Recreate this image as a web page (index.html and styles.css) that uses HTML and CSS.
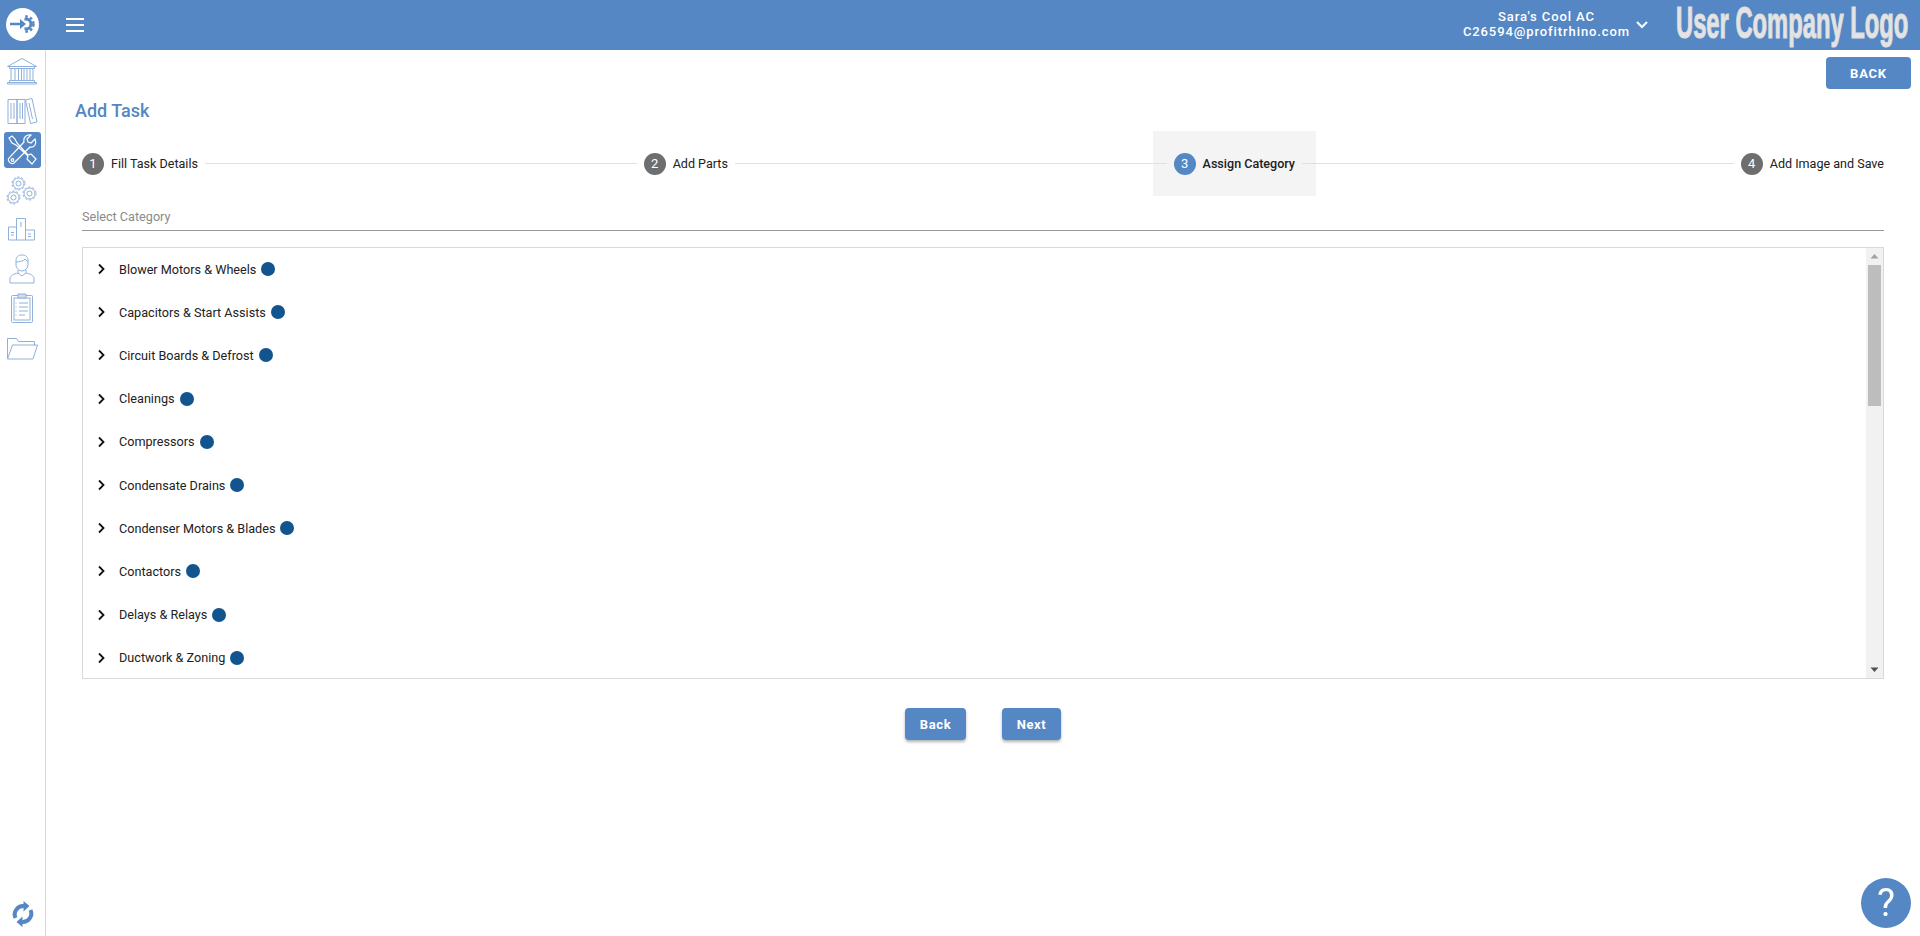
FILE: index.html
```html
<!DOCTYPE html>
<html lang="en">
<head>
<meta charset="utf-8">
<title>Add Task</title>
<link rel="stylesheet" href="styles.css">
</head>
<body>
<header class="topbar">
  <div class="brand">
    <svg width="33" height="33" viewBox="0 0 33 33"><circle cx="16.500" cy="16.500" r="16.500" fill="#fff"/><circle cx="20" cy="16" r="7.500" fill="none" stroke="#5587c4" stroke-width="2.500" stroke-dasharray="2.600 2.300"/><circle cx="20" cy="16" r="5" fill="none" stroke="#5587c4" stroke-width="3"/><rect x="11" y="8" width="7.500" height="16" fill="#fff"/><path d="M4 14.800h10V11l6 5-6 5v-3.800H4z" fill="#5587c4"/></svg>
  </div>
  <button class="menu" aria-label="Menu"><span></span><span></span><span></span></button>
  <div class="spacer"></div>
  <div class="account">
    <div>Sara's Cool AC</div>
    <div>C26594@profitrhino.com</div>
  </div>
  <svg class="acct-chev" width="14" height="10" viewBox="0 0 14 10"><path d="M2 2l5 5 5-5" fill="none" stroke="#fff" stroke-width="2"/></svg>
  <div class="logo"><span>User Company Logo</span></div>
</header>
<div class="body">
  <nav class="sidebar">
    <div class="nav-items">
      <a class="nav-item"><svg width="32" height="28" viewBox="0 0 32 28"><g fill="none" stroke="#8fb0da" stroke-width="1"><path d="M1.500 9.500L16 1.500l14.500 8z"/><path d="M3.500 9.500v2h25v-2"/><path d="M5 11.500v12h4v-12M12.500 11.500v12h3v-12M18 11.500v12h3v-12M24 11.500v12h3v-12"/><path d="M3.500 23.500h25v2h-25zM1.500 25.500h29v1.500h-29z"/></g></svg></a>
      <a class="nav-item"><svg width="32" height="28" viewBox="0 0 32 28"><g fill="none" stroke="#8fb0da" stroke-width="1"><path d="M2 2.500h9v24H2zM11 2.500h8v24h-8zM19.500 3l6.500-1.500 5 23.500-6.500 1.500z"/><path d="M5 6v16M8 6v16M14 6v16M16.500 6v16M23 6l3.500 16"/></g></svg></a>
      <a class="nav-item active"><svg width="32" height="32" viewBox="0 0 32 32"><g fill="none" stroke="#fff" stroke-width="1.200"><path d="M3 4l3-2 3 3 2 4 11 12 3-1 5 5-4 5-5-5 1-3L10 11 6 9z"/><path d="M29 5l-4 4-3-1-1-3 4-4c-4-1-8 2-7 7L3 24c-2 3 2 7 5 5L24 13c4 1 7-3 5-8z"/><circle cx="6.500" cy="26" r="1.300"/></g></svg></a>
      <a class="nav-item"><svg width="32" height="36" viewBox="0 0 32 36"><g fill="none" stroke="#8fb0da" stroke-width="1"><circle cx="12.500" cy="11.500" r="5.500"/><circle cx="12.500" cy="11.500" r="2.500"/><circle cx="12.500" cy="11.500" r="6.500" stroke-dasharray="2 2.100"/><circle cx="7.500" cy="25.500" r="5.500"/><circle cx="7.500" cy="25.500" r="2.500"/><circle cx="7.500" cy="25.500" r="6.500" stroke-dasharray="2 2.100"/><circle cx="23.500" cy="21.500" r="5.500"/><circle cx="23.500" cy="21.500" r="2.500"/><circle cx="23.500" cy="21.500" r="6.500" stroke-dasharray="2 2.100"/></g></svg></a>
      <a class="nav-item"><svg width="30" height="24" viewBox="0 0 30 24"><g fill="none" stroke="#8fb0da" stroke-width="1"><path d="M1.500 10h8v13h-8zM9.500 1.500h9V23h-9zM18.500 13h9v10h-9z"/><path d="M14 5v5M4 15.500h3M4 18h3M21 17h3M21 19.500h3"/></g></svg></a>
      <a class="nav-item"><svg width="26" height="30" viewBox="0 0 26 30"><g fill="none" stroke="#8fb0da" stroke-width="1"><path d="M7 7c0-4 2-6 6-6s6 2 6 6v4c0 3-3 6-6 6s-6-3-6-6z"/><path d="M7 8c3 0 8-1 9-3l3 3"/><path d="M9 16v3c-4 1-8 2-8 6v4h24v-4c0-4-4-5-8-6v-3"/><path d="M9 19l4 3 4-3"/></g></svg></a>
      <a class="nav-item"><svg width="24" height="30" viewBox="0 0 24 30"><g fill="none" stroke="#8fb0da" stroke-width="1"><rect x="1.500" y="2.500" width="21" height="27" rx="1"/><rect x="4" y="5" width="16" height="22"/><path d="M8 1h8v4H8z" fill="#cfdcee"/><path d="M5.500 10h1M5.500 14h1M5.500 18h1M5.500 22h1M9 10h9M9 14h9M9 18h9M9 22h6"/></g></svg></a>
      <a class="nav-item"><svg width="32" height="24" viewBox="0 0 32 24"><g fill="none" stroke="#8fb0da" stroke-width="1"><path d="M1.500 22V2.500h9l2 3h16v4"/><path d="M1.500 23l5-14h25l-4.500 14z"/></g></svg></a>
    </div>
    <div class="spacer"></div>
    <svg class="sync" width="26" height="26" viewBox="0 0 26 26"><g fill="none" stroke="#5587c4" stroke-width="4"><path d="M5.500 17A8.500 8.500 0 0 1 14 5"/><path d="M20.500 9A8.500 8.500 0 0 1 12 21"/></g><path d="M13.500 0l6 5-6 5.500zM12.500 26l-6-5 6-5.500z" fill="#5587c4"/></svg>
  </nav>
  <main class="content">
    <div class="top-actions"><button class="btn btn-top">BACK</button></div>
    <h1 class="title">Add Task</h1>
    <div class="stepper">
      <div class="step"><span class="num">1</span><span class="label">Fill Task Details</span></div>
      <div class="line"></div>
      <div class="step"><span class="num">2</span><span class="label">Add Parts</span></div>
      <div class="line"></div>
      <div class="step current"><span class="num">3</span><span class="label">Assign Category</span></div>
      <div class="line"></div>
      <div class="step"><span class="num">4</span><span class="label">Add Image and Save</span></div>
    </div>
    <div class="panel">
      <div class="field">Select Category</div>
      <div class="tree">
        <ul class="rows">
          <li class="row"><svg class="chev" width="9" height="12" viewBox="0 0 9 12"><path d="M2 1.500L6.500 6 2 10.500" fill="none" stroke="#111" stroke-width="1.800"/></svg><span>Blower Motors &amp; Wheels</span><i class="dot"></i></li>
          <li class="row"><svg class="chev" width="9" height="12" viewBox="0 0 9 12"><path d="M2 1.500L6.500 6 2 10.500" fill="none" stroke="#111" stroke-width="1.800"/></svg><span>Capacitors &amp; Start Assists</span><i class="dot"></i></li>
          <li class="row"><svg class="chev" width="9" height="12" viewBox="0 0 9 12"><path d="M2 1.500L6.500 6 2 10.500" fill="none" stroke="#111" stroke-width="1.800"/></svg><span>Circuit Boards &amp; Defrost</span><i class="dot"></i></li>
          <li class="row"><svg class="chev" width="9" height="12" viewBox="0 0 9 12"><path d="M2 1.500L6.500 6 2 10.500" fill="none" stroke="#111" stroke-width="1.800"/></svg><span>Cleanings</span><i class="dot"></i></li>
          <li class="row"><svg class="chev" width="9" height="12" viewBox="0 0 9 12"><path d="M2 1.500L6.500 6 2 10.500" fill="none" stroke="#111" stroke-width="1.800"/></svg><span>Compressors</span><i class="dot"></i></li>
          <li class="row"><svg class="chev" width="9" height="12" viewBox="0 0 9 12"><path d="M2 1.500L6.500 6 2 10.500" fill="none" stroke="#111" stroke-width="1.800"/></svg><span>Condensate Drains</span><i class="dot"></i></li>
          <li class="row"><svg class="chev" width="9" height="12" viewBox="0 0 9 12"><path d="M2 1.500L6.500 6 2 10.500" fill="none" stroke="#111" stroke-width="1.800"/></svg><span>Condenser Motors &amp; Blades</span><i class="dot"></i></li>
          <li class="row"><svg class="chev" width="9" height="12" viewBox="0 0 9 12"><path d="M2 1.500L6.500 6 2 10.500" fill="none" stroke="#111" stroke-width="1.800"/></svg><span>Contactors</span><i class="dot"></i></li>
          <li class="row"><svg class="chev" width="9" height="12" viewBox="0 0 9 12"><path d="M2 1.500L6.500 6 2 10.500" fill="none" stroke="#111" stroke-width="1.800"/></svg><span>Delays &amp; Relays</span><i class="dot"></i></li>
          <li class="row"><svg class="chev" width="9" height="12" viewBox="0 0 9 12"><path d="M2 1.500L6.500 6 2 10.500" fill="none" stroke="#111" stroke-width="1.800"/></svg><span>Ductwork &amp; Zoning</span><i class="dot"></i></li>
        </ul>
        <div class="scrollbar">
          <svg class="arrow" width="17" height="17" viewBox="0 0 17 17"><path d="M4.500 10.500h8L8.500 6z" fill="#a3a3a3"/></svg>
          <div class="thumb"></div>
          <div class="spacer"></div>
          <svg class="arrow" width="17" height="17" viewBox="0 0 17 17"><path d="M4.500 6.500h8L8.500 11z" fill="#505050"/></svg>
        </div>
      </div>
      <div class="actions">
        <button class="btn btn-raised btn-back">Back</button>
        <button class="btn btn-raised btn-next">Next</button>
      </div>
    </div>
  </main>
</div>
<button class="help" aria-label="Help">?</button>
</body>
</html>
```
FILE: styles.css
```css
* { box-sizing: border-box; }
html, body { margin: 0; height: 100%; }
body { font-family: Roboto, "Liberation Sans", sans-serif; color: #212121; background: #fff; overflow: hidden; display: flex; flex-direction: column; }
.spacer { flex: 1; }

.topbar { height: 50px; flex: none; background: #5587c4; color: #fff; display: flex; align-items: center; }
.brand { width: 46px; padding: 0 0 2px 6px; display: flex; }
.menu { margin-left: 20px; width: 18px; height: 14px; padding: 0; border: 0; background: none; display: flex; flex-direction: column; justify-content: space-between; }
.menu span { height: 2px; background: #fff; display: block; }
.account { font-size: 13px; font-weight: 500; letter-spacing: .9px; line-height: 14.500px; text-align: center; padding-bottom: 1px; }
.acct-chev { margin: 0 0 1px 5px; flex: none; }
.logo { width: 237px; margin: 0 7px 0 27px; height: 50px; }
.logo span { display: block; width: max-content; white-space: nowrap; font-family: "Liberation Sans", sans-serif; font-weight: 700; font-size: 44px; line-height: 46px; transform-origin: left center; transform: scaleX(.54); color: #e4e4e4; -webkit-text-stroke: 1.200px #dedede; }

.body { flex: 1; display: flex; min-height: 0; }
.sidebar { width: 46px; flex: none; border-right: 1px solid #d9d9d9; padding: 3px 0 9px; display: flex; flex-direction: column; align-items: center; }
.nav-items { display: flex; flex-direction: column; gap: 3.500px; padding-right: 1px; }
.nav-item { width: 37px; height: 36px; border-radius: 3px; display: flex; align-items: center; justify-content: center; }
.nav-item.active { background: #5587c4; }
.sync { flex: none; }

.content { flex: 1; min-width: 0; padding: 7px 14px 0 15px; display: flex; flex-direction: column; }
.top-actions { display: flex; justify-content: flex-end; margin-right: -5px; }
.btn { border: 0; border-radius: 4px; background: #5587c4; color: #fff; font-family: Roboto, "Liberation Sans", sans-serif; font-weight: 700; font-size: 13px; letter-spacing: .8px; padding: 0; }
.btn-top { width: 85px; height: 32px; }
.title { margin: 10px 0 0 14px; font-size: 18px; line-height: 24px; font-weight: 500; color: #5587c4; }

.stepper { display: flex; align-items: center; margin: 8px 1px 0 0; }
.step { height: 65px; padding: 0 21px; display: flex; align-items: center; gap: 7px; font-size: 12.550px; flex: none; }
.step.current { background: #f4f4f4; font-weight: 500; }
.num { width: 22px; height: 22px; border-radius: 50%; background: #6e6e6e; color: #fff; display: flex; align-items: center; justify-content: center; font-size: 13px; font-weight: 400; }
.step.current .num { background: #5587c4; }
.line { flex: 1; height: 1px; background: #e0e0e0; margin: 0 -14px; position: relative; }

.panel { padding: 0 22px 0 21px; }
.field { margin-top: 10px; height: 25px; border-bottom: 1px solid #999; font-size: 12.650px; line-height: 21px; color: #8a8a8a; }
.tree { margin-top: 16px; height: 432px; border: 1px solid #d9d9d9; display: flex; overflow: hidden; }
.rows { flex: 1; list-style: none; margin: 0; padding: 0; min-width: 0; }
.row { height: 43.200px; padding: 0 0 1px 14px; display: flex; align-items: center; font-size: 12.650px; color: #212121; }
.chev { margin-right: 13px; flex: none; }
.dot { width: 14px; height: 14px; margin-left: 5px; border-radius: 50%; background: #11548e; display: block; }
.scrollbar { width: 17px; flex: none; background: #f1f1f1; display: flex; flex-direction: column; }
.arrow { flex: none; }
.thumb { height: 141px; margin: 0 2px; background: #bdbdbd; }

.actions { display: flex; justify-content: center; gap: 36px; margin-top: 29px; }
.btn-raised { height: 32px; box-shadow: 0 2px 3px rgba(0,0,0,.3); letter-spacing: .6px; }
.btn-back { width: 61px; }
.btn-next { width: 59px; }

.help { position: fixed; left: 1861px; top: 878px; width: 50px; height: 50px; padding: 0; border: 0; border-radius: 50%; background: #5587c4; color: #fff; font-family: Roboto, "Liberation Sans", sans-serif; font-size: 38px; line-height: 50px; text-align: center; }
```
